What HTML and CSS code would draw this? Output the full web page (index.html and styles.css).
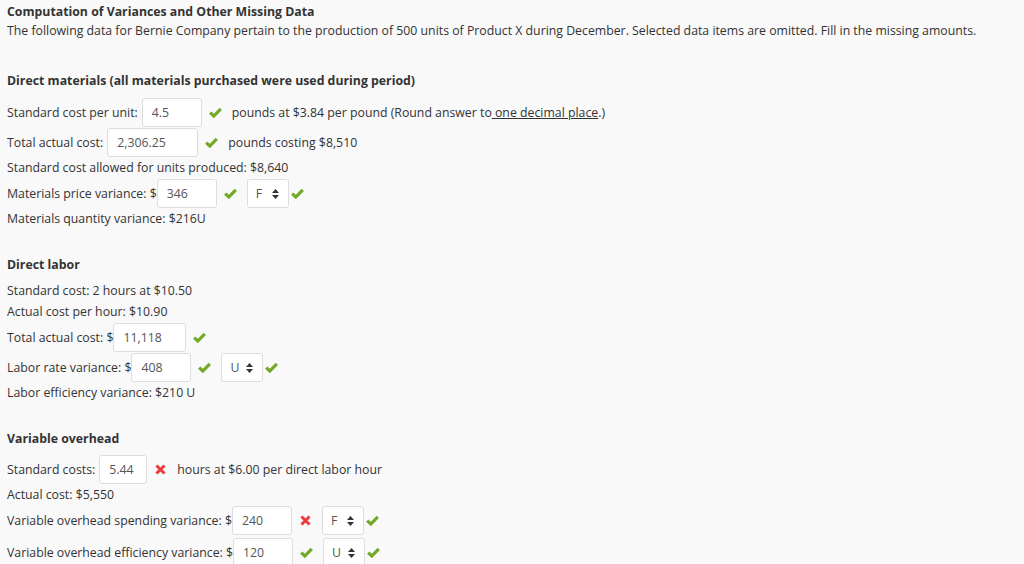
FILE: index.html
```html
<!DOCTYPE html>
<html lang="en">
<head>
<meta charset="utf-8">
<title>Computation of Variances and Other Missing Data</title>
<link rel="stylesheet" href="styles.css">
</head>
<body>
<main class="page">
  <h1 class="title">Computation of Variances and Other Missing Data</h1>
  <p class="intro">The following data for Bernie Company pertain to the production of 500 units of Product X during December. Selected data items are omitted. Fill in the missing amounts.</p>

  <section class="block block-first">
    <h2 class="block-head">Direct materials (all materials purchased were used during period)</h2>
    <div class="rows">
      <div class="row">
        <span class="label sp">Standard cost per unit:</span>
        <input class="field w60" value="4.5" readonly>
        <span class="mark"><svg class="ok" width="13" height="11" viewBox="0 0 13 11"><path d="M1.2 5.6 L4.8 9 L11.8 1.8"/></svg></span>
        <span class="note">pounds at $3.84 per pound (Round answer to<a href="#" class="hint"> one decimal place</a>.)</span>
      </div>
      <div class="row">
        <span class="label sp">Total actual cost:</span>
        <input class="field w91" value="2,306.25" readonly>
        <span class="mark"><svg class="ok" width="13" height="11" viewBox="0 0 13 11"><path d="M1.2 5.6 L4.8 9 L11.8 1.8"/></svg></span>
        <span class="note">pounds costing $8,510</span>
      </div>
      <div class="row"><span class="label">Standard cost allowed for units produced: $8,640</span></div>
      <div class="row">
        <span class="label">Materials price variance: $</span>
        <input class="field w60" value="346" readonly>
        <span class="mark"><svg class="ok" width="13" height="11" viewBox="0 0 13 11"><path d="M1.2 5.6 L4.8 9 L11.8 1.8"/></svg></span>
        <span class="picker"><span>F</span><svg class="arrows" width="7" height="10" viewBox="0 0 7 10"><path d="M3.5 0 L7 4 L0 4 Z M0 6 L7 6 L3.5 10 Z"/></svg></span>
        <span class="mark after"><svg class="ok" width="13" height="11" viewBox="0 0 13 11"><path d="M1.2 5.6 L4.8 9 L11.8 1.8"/></svg></span>
      </div>
      <div class="row"><span class="label">Materials quantity variance: $216U</span></div>
    </div>
  </section>

  <section class="block">
    <h2 class="block-head">Direct labor</h2>
    <div class="rows">
      <div class="row"><span class="label">Standard cost: 2 hours at $10.50</span></div>
      <div class="row"><span class="label">Actual cost per hour: $10.90</span></div>
      <div class="row">
        <span class="label">Total actual cost: $</span>
        <input class="field w73" value="11,118" readonly>
        <span class="mark"><svg class="ok" width="13" height="11" viewBox="0 0 13 11"><path d="M1.2 5.6 L4.8 9 L11.8 1.8"/></svg></span>
      </div>
      <div class="row">
        <span class="label">Labor rate variance: $</span>
        <input class="field w60" value="408" readonly>
        <span class="mark"><svg class="ok" width="13" height="11" viewBox="0 0 13 11"><path d="M1.2 5.6 L4.8 9 L11.8 1.8"/></svg></span>
        <span class="picker"><span>U</span><svg class="arrows" width="7" height="10" viewBox="0 0 7 10"><path d="M3.5 0 L7 4 L0 4 Z M0 6 L7 6 L3.5 10 Z"/></svg></span>
        <span class="mark after"><svg class="ok" width="13" height="11" viewBox="0 0 13 11"><path d="M1.2 5.6 L4.8 9 L11.8 1.8"/></svg></span>
      </div>
      <div class="row"><span class="label">Labor efficiency variance: $210 U</span></div>
    </div>
  </section>

  <section class="block">
    <h2 class="block-head">Variable overhead</h2>
    <div class="rows">
      <div class="row">
        <span class="label sp">Standard costs:</span>
        <input class="field w48" value="5.44" readonly>
        <span class="mark"><svg class="bad" width="11" height="11" viewBox="0 0 11 11"><path d="M1.5 1.5 L9.5 9.5 M9.5 1.5 L1.5 9.5"/></svg></span>
        <span class="note">hours at $6.00 per direct labor hour</span>
      </div>
      <div class="row"><span class="label">Actual cost: $5,550</span></div>
      <div class="row">
        <span class="label">Variable overhead spending variance: $</span>
        <input class="field w60" value="240" readonly>
        <span class="mark"><svg class="bad" width="11" height="11" viewBox="0 0 11 11"><path d="M1.5 1.5 L9.5 9.5 M9.5 1.5 L1.5 9.5"/></svg></span>
        <span class="picker"><span>F</span><svg class="arrows" width="7" height="10" viewBox="0 0 7 10"><path d="M3.5 0 L7 4 L0 4 Z M0 6 L7 6 L3.5 10 Z"/></svg></span>
        <span class="mark after"><svg class="ok" width="13" height="11" viewBox="0 0 13 11"><path d="M1.2 5.6 L4.8 9 L11.8 1.8"/></svg></span>
      </div>
      <div class="row row-spaced">
        <span class="label">Variable overhead efficiency variance: $</span>
        <input class="field w60" value="120" readonly>
        <span class="mark"><svg class="ok" width="13" height="11" viewBox="0 0 13 11"><path d="M1.2 5.6 L4.8 9 L11.8 1.8"/></svg></span>
        <span class="picker"><span>U</span><svg class="arrows" width="7" height="10" viewBox="0 0 7 10"><path d="M3.5 0 L7 4 L0 4 Z M0 6 L7 6 L3.5 10 Z"/></svg></span>
        <span class="mark after"><svg class="ok" width="13" height="11" viewBox="0 0 13 11"><path d="M1.2 5.6 L4.8 9 L11.8 1.8"/></svg></span>
      </div>
    </div>
  </section>
</main>
</body>
</html>
```

FILE: styles.css
```css
* { box-sizing: border-box; }
html, body { margin: 0; padding: 0; }
body {
  background: #f9f9f9;
  color: #333;
  font-family: "Open Sans", "Liberation Sans", sans-serif;
  font-size: 12.3px;
  overflow: hidden;
}
.page { padding: 3px 7px 0; }
.title {
  margin: 0;
  font-size: 12.3px;
  font-weight: 700;
  line-height: 18px;
}
.intro { margin: 0; line-height: 20px; white-space: nowrap; }
.block { margin-top: 26px; }
.block-first { margin-top: 30px; }
.block-head {
  margin: 0 0 6px;
  font-size: 12.3px;
  font-weight: 700;
  line-height: 20px;
}
.block-first .block-head { margin-bottom: 7px; }
.rows { display: flex; flex-direction: column; gap: 1px; }
.row {
  display: flex;
  align-items: center;
  min-height: 20px;
  line-height: 20px;
  white-space: nowrap;
}
.row-spaced { margin-top: 2px; }
.label.sp { margin-right: 4px; }
.field {
  height: 29px;
  border: 1px solid #ddd;
  border-radius: 3px;
  background: #fff;
  padding: 0 0 0 9px;
  font: inherit;
  color: #555;
  outline: none;
}
.w48 { width: 48px; }
.w60 { width: 60px; }
.w73 { width: 73px; }
.w91 { width: 91px; }
.mark {
  width: 13px;
  margin: 0 10px 0 7px;
  display: flex;
  justify-content: center;
  align-items: center;
}
.mark.after { margin: 0 0 0 2px; }
.ok path { fill: none; stroke: #72a926; stroke-width: 3.2; }
.bad path { fill: none; stroke: #ee3a3a; stroke-width: 3; }
.note { color: #333; }
.hint { color: #333; text-decoration: underline; }
.picker {
  width: 42px;
  height: 29px;
  border: 1px solid #ddd;
  border-radius: 3px;
  background: #fff;
  display: flex;
  align-items: center;
  justify-content: space-between;
  padding: 0 9px 0 8px;
  color: #555;
}
.arrows path { fill: #333; }
```
